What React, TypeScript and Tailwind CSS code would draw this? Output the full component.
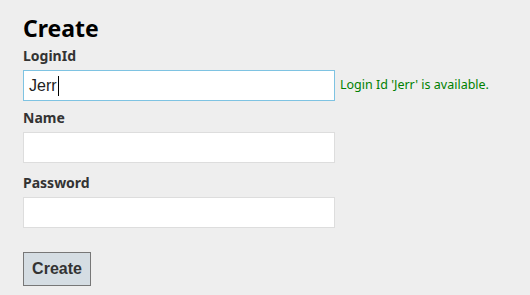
import React from "react";

export default function App() {
  const label = "text-[14px] leading-[20px] font-bold text-[#333333]";
  const input =
    "w-[312px] h-[31px] bg-white border border-[#dddddd] outline-none";
  return (
    <div
      className="w-[530px] h-[295px] bg-[#eeeeee] pl-[23px] pt-[14px]"
      style={{ fontFamily: '"Noto Sans", "Open Sans", sans-serif' }}
    >
      <h1 className="text-[23px] leading-[28px] font-bold text-black">Create</h1>
      <div className={`${label} mt-[4px]`}>LoginId</div>
      <div className="flex items-center mt-[4px]">
        <div
          className="w-[312px] h-[31px] bg-white border border-[#7ec3e2] flex items-center pl-[5px] text-[16px] text-[#222222]"
          style={{ fontFamily: '"Liberation Sans", Arial, sans-serif' }}
        >
          Jerr<span className="inline-block w-[1px] h-[20px] bg-black ml-[1px]" />
        </div>
        <span className="ml-[5px] text-[12.5px] text-[#008000]">
          Login Id 'Jerr' is available.
        </span>
      </div>
      <div className={`${label} mt-[7px]`}>Name</div>
      <div className={`${input} mt-[4px]`} />
      <div className={`${label} mt-[10px]`}>Password</div>
      <div className={`${input} mt-[4px]`} />
      <button
        className="mt-[24px] w-[68px] h-[34px] bg-[#d5dde3] border border-[#777777] text-[16px] font-bold text-[#333333] flex items-center justify-center"
        style={{ fontFamily: '"Liberation Sans", Arial, sans-serif' }}
      >
        Create
      </button>
    </div>
  );
}
